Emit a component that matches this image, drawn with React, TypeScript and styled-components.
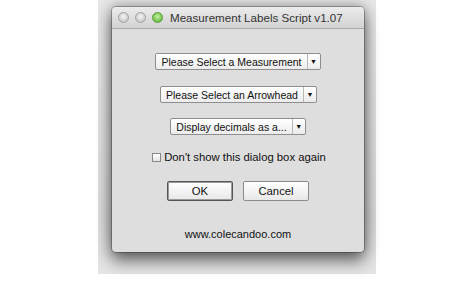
import React from "react";
import styled, { createGlobalStyle } from "styled-components";

const GlobalStyle = createGlobalStyle`
  html, body {
    margin: 0;
    padding: 0;
    background: #ffffff;
  }
  body {
    width: 474px;
    height: 289px;
    overflow: hidden;
    font-family: "Liberation Sans", Arial, sans-serif;
  }
`;

const Backdrop = styled.div`
  margin-left: 98px;
  width: 278px;
  height: 274px;
  padding: 7px 12px 0 14px;
  box-sizing: border-box;
  background: linear-gradient(to bottom, #e6e6e6 0%, #dadada 80%, #e6e6e6 100%);
`;

const Window = styled.div`
  width: 252px;
  height: 245px;
  border-radius: 4px;
  overflow: hidden;
  background: #dedede;
  box-shadow: 0 0 0 1px rgba(0, 0, 0, 0.25), 0 10px 16px rgba(0, 0, 0, 0.45),
    0 0 14px rgba(0, 0, 0, 0.4);
  display: flex;
  flex-direction: column;
`;

const TitleBar = styled.div`
  height: 21px;
  display: flex;
  align-items: center;
  padding-left: 6px;
  background: linear-gradient(to bottom, #ececec, #d2d2d2);
  border-bottom: 1px solid #a8a8a8;
`;

const Light = styled.span<{ $color?: string }>`
  width: 11px;
  height: 11px;
  border-radius: 50%;
  margin-right: 6px;
  box-sizing: border-box;
  border: 1px solid ${(p) => (p.$color ? "#5c9a3e" : "#a0a0a0")};
  background: ${(p) =>
    p.$color
      ? `radial-gradient(circle at 50% 40%, #c8f0a0 0%, ${p.$color} 70%)`
      : "radial-gradient(circle at 50% 40%, #f4f4f4 0%, #c8c8c8 80%)"};
`;

const Title = styled.span`
  margin-left: 1px;
  font-size: 11.6px;
  color: #333;
  white-space: nowrap;
`;

const Body = styled.div`
  flex: 1;
  display: flex;
  flex-direction: column;
  align-items: center;
  padding-top: 24px;
`;

const Select = styled.div<{ $mt: number; $shift?: number }>`
  margin-top: ${(p) => p.$mt}px;
  margin-left: ${(p) => p.$shift || 0}px;
  height: 17px;
  display: flex;
  align-items: stretch;
  box-sizing: border-box;
  border: 1px solid #8e8e8e;
  border-radius: 2px;
  background: linear-gradient(to bottom, #ffffff, #ececec);
  font-size: 10.5px;
  color: #111;
`;

const SelectLabel = styled.span`
  display: flex;
  align-items: center;
  padding: 0 5px 0 5px;
  border-right: 1px solid #b8b8b8;
  white-space: nowrap;
`;

const Arrow = styled.span`
  width: 12px;
  display: flex;
  align-items: center;
  justify-content: center;
  font-size: 7px;
`;

const CheckRow = styled.label`
  margin-top: 16px;
  display: flex;
  align-items: center;
  font-size: 11.3px;
  color: #111;
  margin-left: 2px;
  white-space: nowrap;
`;

const Box = styled.span`
  width: 9px;
  height: 9px;
  box-sizing: border-box;
  border: 1px solid #888;
  background: linear-gradient(to bottom, #fff, #e6e6e6);
  margin-right: 3px;
`;

const Buttons = styled.div`
  margin-top: 18px;
  display: flex;
  gap: 10px;
`;

const Button = styled.div<{ $default?: boolean }>`
  width: 66px;
  height: 20px;
  box-sizing: border-box;
  display: flex;
  align-items: center;
  justify-content: center;
  border: 1px solid ${(p) => (p.$default ? "#555" : "#8a8a8a")};
  border-radius: 2px;
  background: linear-gradient(to bottom, #ffffff, #e8e8e8);
  box-shadow: ${(p) => (p.$default ? "inset 0 0 0 1px #9a9a9a" : "none")};
  font-size: 11.3px;
  color: #111;
`;

const Site = styled.div`
  margin-top: 27px;
  font-size: 11px;
  color: #111;
`;

const Dropdown = ({ label, mt, shift }: { label: string; mt: number; shift?: number }) => (
  <Select $mt={mt} $shift={shift}>
    <SelectLabel>{label}</SelectLabel>
    <Arrow>▼</Arrow>
  </Select>
);

const App = () => (
  <>
    <GlobalStyle />
    <Backdrop>
      <Window>
        <TitleBar>
          <Light />
          <Light />
          <Light $color="#6cc04a" />
          <Title>Measurement Labels Script v1.07</Title>
        </TitleBar>
        <Body>
          <Dropdown label="Please Select a Measurement" mt={0} />
          <Dropdown label="Please Select an Arrowhead" mt={16} shift={1} />
          <Dropdown label="Display decimals as a..." mt={15} />
          <CheckRow>
            <Box />
            Don't show this dialog box again
          </CheckRow>
          <Buttons>
            <Button $default>OK</Button>
            <Button>Cancel</Button>
          </Buttons>
          <Site>www.colecandoo.com</Site>
        </Body>
      </Window>
    </Backdrop>
  </>
);

export default App;
